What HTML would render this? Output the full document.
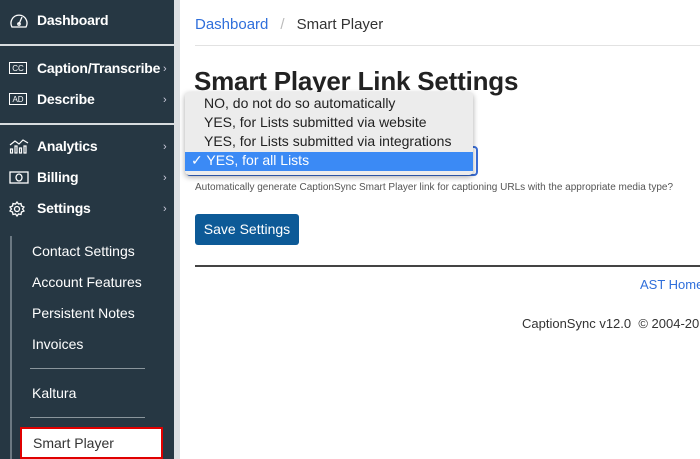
<!DOCTYPE html>
<html><head><style>
*{margin:0;padding:0;box-sizing:border-box}
body{width:700px;height:459px;overflow:hidden;background:#fff;font-family:"Liberation Sans",sans-serif;position:relative}
.sb{position:absolute;left:0;top:0;width:174px;height:459px;background:#263743;color:#fff}
.edge{position:absolute;left:174px;top:0;width:6px;height:459px;background:#dde0e3}
.it{position:absolute;left:37px;font-size:14px;font-weight:bold;color:#fff;white-space:nowrap;letter-spacing:-0.2px}
.ic{position:absolute;left:9px}
.chev{position:absolute;left:163px;font-size:11px;color:#ccd}
.hr{position:absolute;left:0;width:174px;height:2px;background:#d8dcdf}
.sub{position:absolute;left:32px;font-size:14px;color:#fff}
.vl{position:absolute;left:10px;top:236px;width:2px;height:223px;background:#6b7882}
.shr{position:absolute;left:30px;width:115px;height:1px;background:#8a959c}
a{color:#2f6fdb;text-decoration:none}
</style></head><body>
<div class="sb">
<svg class="ic" style="top:12px" width="20" height="18" viewBox="0 0 20 18" fill="none" stroke="#fff" stroke-width="1.3"><path d="M3 15 A8 8 0 1 1 17 15 Z"/><path d="M10 12 L13 5"/><circle cx="10" cy="12" r="1.2"/></svg>
<div class="it" style="top:12px">Dashboard</div>
<div class="hr" style="top:44px"></div>
<svg class="ic" style="top:62px" width="18" height="12" viewBox="0 0 18 12"><rect x="0.5" y="0.5" width="17" height="11" fill="none" stroke="#fff"/><text x="9" y="9" font-size="8" fill="#fff" text-anchor="middle" font-family="Liberation Sans">CC</text></svg>
<div class="it" style="top:60px">Caption/Transcribe</div><div class="chev" style="top:63px">›</div>
<svg class="ic" style="top:93px" width="18" height="12" viewBox="0 0 18 12"><rect x="0.5" y="0.5" width="17" height="11" fill="none" stroke="#fff"/><text x="9" y="9" font-size="8" fill="#fff" text-anchor="middle" font-family="Liberation Sans">AD</text></svg>
<div class="it" style="top:91px">Describe</div><div class="chev" style="top:94px">›</div>
<div class="hr" style="top:123px"></div>
<svg class="ic" style="top:138px" width="20" height="16" viewBox="0 0 20 16" fill="none" stroke="#fff" stroke-width="1.2"><path d="M1 7 L6 3 L10 6 L14 2 L19 5"/><rect x="1.5" y="11" width="2" height="4"/><rect x="6" y="8" width="2" height="7"/><rect x="10.5" y="10" width="2" height="5"/><rect x="15" y="8" width="2" height="7"/></svg>
<div class="it" style="top:138px">Analytics</div><div class="chev" style="top:141px">›</div>
<svg class="ic" style="top:171px" width="20" height="13" viewBox="0 0 20 13" fill="none" stroke="#fff" stroke-width="1.3"><rect x="1" y="1" width="18" height="11"/><ellipse cx="10" cy="6.5" rx="3" ry="3.5"/></svg>
<div class="it" style="top:169px">Billing</div><div class="chev" style="top:172px">›</div>
<svg class="ic" style="top:201px" width="16" height="16" viewBox="0 0 16 16" fill="none" stroke="#fff" stroke-width="1.3"><circle cx="8" cy="8" r="2.5"/><path d="M8 1 L9.5 3 L12 2.5 L12.5 5 L15 6 L13.5 8 L15 10 L12.5 11 L12 13.5 L9.5 13 L8 15 L6.5 13 L4 13.5 L3.5 11 L1 10 L2.5 8 L1 6 L3.5 5 L4 2.5 L6.5 3 Z"/></svg>
<div class="it" style="top:200px">Settings</div><div class="chev" style="top:203px">›</div>
<div class="vl"></div>
<div class="sub" style="top:243px">Contact Settings</div>
<div class="sub" style="top:274px">Account Features</div>
<div class="sub" style="top:305px">Persistent Notes</div>
<div class="sub" style="top:336px">Invoices</div>
<div class="shr" style="top:368px"></div>
<div class="sub" style="top:385px">Kaltura</div>
<div class="shr" style="top:417px"></div>
<div style="position:absolute;left:20px;top:427px;width:143px;height:32px;background:#fff;border:2px solid #e00000;color:#333;font-size:14px;padding:6px 0 0 11px">Smart Player</div>
</div>
<div class="edge"></div>
<div style="position:absolute;left:195px;top:16px;font-size:15px;color:#333"><a href="#">Dashboard</a><span style="color:#bbb;margin:0 12px">/</span>Smart Player</div>
<div style="position:absolute;left:195px;top:45px;width:505px;height:1px;background:#e2e2e2"></div>
<div style="position:absolute;left:194px;top:66px;font-size:26px;font-weight:bold;color:#222;letter-spacing:-0.2px">Smart Player Link Settings</div>
<div style="position:absolute;left:186px;top:146px;width:292px;height:30px;border:2px solid #3b6fd8;border-radius:4px;background:#fff"></div>
<div style="position:absolute;left:185px;top:92px;width:288px;height:83px;background:#ececec;border-radius:4px;box-shadow:0 2px 6px rgba(0,0,0,.35);font-size:14px;color:#222;padding-top:3px">
<div style="height:19px;padding-left:19px">NO, do not do so automatically</div>
<div style="height:19px;padding-left:19px">YES, for Lists submitted via website</div>
<div style="height:19px;padding-left:19px">YES, for Lists submitted via integrations</div>
<div style="height:19px;padding-left:6px;background:#3b8af5;color:#fff">✓ YES, for all Lists</div>
</div>
<div style="position:absolute;left:195px;top:182px;font-size:10px;color:#555;white-space:nowrap">Automatically generate CaptionSync Smart Player link for captioning URLs with the appropriate media type?</div>
<div style="position:absolute;left:195px;top:214px;width:104px;height:31px;background:#0d5a97;border-radius:3px;color:#fff;font-size:14px;text-align:center;line-height:31px">Save Settings</div>
<div style="position:absolute;left:195px;top:265px;width:505px;height:2px;background:#444"></div>
<div style="position:absolute;left:640px;top:277px;font-size:13px;white-space:nowrap"><a href="#">AST Home</a></div>
<div style="position:absolute;left:522px;top:316px;font-size:13px;color:#333;white-space:nowrap">CaptionSync v12.0 &nbsp;© 2004-2019</div>
</body></html>
